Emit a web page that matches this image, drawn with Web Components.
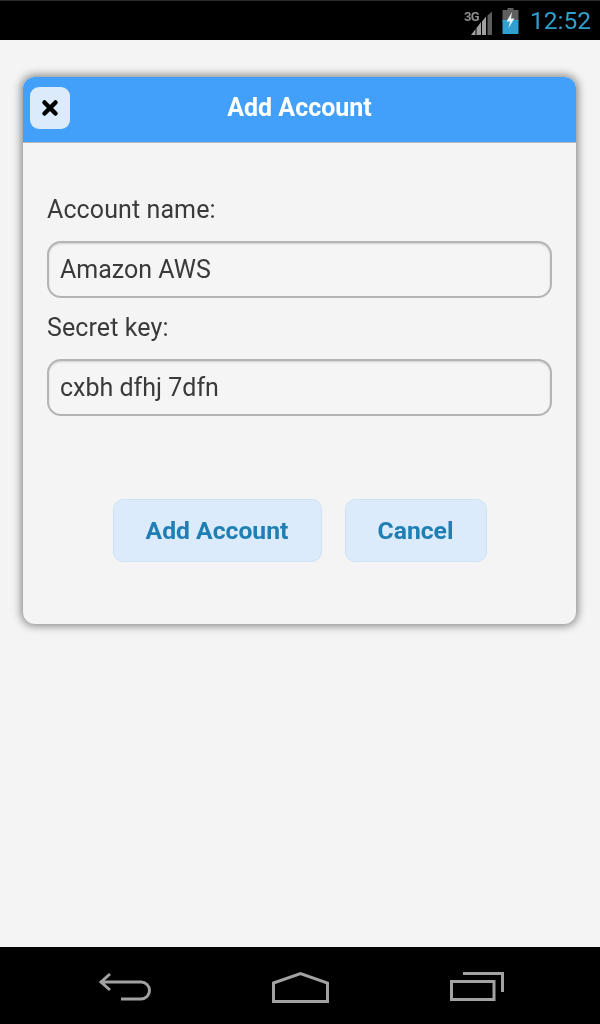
<!DOCTYPE html>
<html>
<head>
<meta charset="utf-8">
<title>Add Account</title>
<style>
  html, body { margin: 0; padding: 0; height: 100%; background: #f4f4f4; }
  body { font-family: Roboto, "Liberation Sans", sans-serif; overflow: hidden; }
</style>
</head>
<body>
<app-screen>
  <status-bar slot="top"></status-bar>
  <account-dialog heading="Add Account">
    <form-field label="Account name:" value="Amazon AWS"></form-field>
    <form-field label="Secret key:" value="cxbh dfhj 7dfn"></form-field>
    <div slot="actions" style="display:flex;justify-content:center;gap:23px">
      <soft-button width="209">Add Account</soft-button>
      <soft-button width="142">Cancel</soft-button>
    </div>
  </account-dialog>
  <nav-bar slot="bottom"></nav-bar>
</app-screen>

<script>
class AppScreen extends HTMLElement {
  constructor() {
    super();
    this.attachShadow({ mode: "open" });
  }
  connectedCallback() {
    this.shadowRoot.innerHTML = `
    <style>
    :host { display: flex; flex-direction: column; width: 600px; height: 1024px; background: #f4f4f4; filter: blur(.45px); }
    main { flex: 1; padding: 37px 23px 0; }
    </style>
    <slot name="top"></slot>
    <main><slot></slot></main>
    <slot name="bottom"></slot>`;
  }
}

class StatusBar extends HTMLElement {
  constructor() {
    super();
    this.attachShadow({ mode: "open" });
  }
  connectedCallback() {
    this.shadowRoot.innerHTML = `
    <style>
    :host { display: flex; align-items: center; justify-content: flex-end; height: 40px; background: #000; padding-right: 9px; box-sizing: border-box; border-top: 1px solid #2a2a2a; }
    .signal { position: relative; width: 29px; height: 34px; margin-right: 9px; }
    .signal svg { display: block; position: absolute; left: 0; top: 0; }
    .net { position: absolute; left: 0; top: 6px; font: bold 13px/13px Roboto, sans-serif; color: #8c8c8c; letter-spacing: -0.8px; }
    .battery { display: block; margin-right: 11px; }
    .clock { font: 400 24.500px/30px Roboto, sans-serif; color: #2fa0d0; }
    </style>
    <div class="signal">
      <svg width="29" height="34" viewBox="0 0 29 34">
        <path d="M7 31h4.500v-6L7 31zM12.500 31H17V18l-4.500 6zM18 31h4V12.500l-4 5z" fill="#a0a0a0"/>
        <path d="M23.500 31H28V7.500l-4.500 4z" fill="#5c5c5c"/>
      </svg>
      <span class="net">3G</span>
    </div>
    <svg class="battery" width="17" height="26" viewBox="0 0 17 26">
      <path d="M5.500 0h6v2h5v11H.5V2h5z" fill="#5e5e5e"/>
      <rect x="0.500" y="12" width="16" height="14" fill="#2fa0d0"/>
      <path d="M10 4 4.500 13.500H8L6.500 20l6-9.500H9z" fill="#e8f4fa"/>
    </svg>
    <span class="clock">12:52</span>`;
  }
}

class AccountDialog extends HTMLElement {
  constructor() {
    super();
    this.attachShadow({ mode: "open" });
  }
  connectedCallback() {
    const heading = this.getAttribute("heading") || "";
    this.shadowRoot.innerHTML = `
    <style>
    :host { display: block; width: 553px; height: 547px; box-sizing: border-box; background: #f4f4f4; border-radius: 12px; box-shadow: 0 0 8px 2px rgba(0,0,0,.45); overflow: hidden; }
    header { position: relative; height: 66px; background: #42a0fb; border-bottom: 1px solid #b8b8b8; box-sizing: border-box; display: flex; align-items: center; justify-content: center; }
    h1 { margin: 0 0 3px; font: 700 25px/30px Roboto, sans-serif; color: #fff; }
    .close { position: absolute; left: 7px; top: 10px; width: 40px; height: 42px; background: #dcebfb; border-radius: 9px; display: flex; align-items: center; justify-content: center; }
    .body { padding: 52px 24px 0 24px; display: flex; flex-direction: column; }
    .fields { display: flex; flex-direction: column; gap: 15px; }
    .actions { margin-top: 83px; }
    </style>
    <header>
      <div class="close">
        <svg width="18" height="18" viewBox="0 0 18 18"><path d="M3.500 3.500l11 11M14.500 3.500l-11 11" stroke="#000" stroke-width="4.500" stroke-linecap="round"/></svg>
      </div>
      <h1>${heading}</h1>
    </header>
    <div class="body">
      <div class="fields"><slot></slot></div>
      <div class="actions"><slot name="actions"></slot></div>
    </div>`;
  }
}

class FormField extends HTMLElement {
  constructor() {
    super();
    this.attachShadow({ mode: "open" });
  }
  connectedCallback() {
    const label = this.getAttribute("label") || "";
    const value = this.getAttribute("value") || "";
    this.shadowRoot.innerHTML = `
    <style>
    :host { display: block; font: 400 25px/30px Roboto, sans-serif; color: #3a3a3a; }
    label { display: block; height: 30px; margin-bottom: 16px; letter-spacing: .1px; }
    .input { height: 57px; box-sizing: border-box; border: 2px solid #b4b4b4; border-radius: 14px; padding: 0 11px; line-height: 53px; box-shadow: inset 0 1px 2px rgba(0,0,0,.15); background: #f5f5f5; }
    </style>
    <label>${label}</label>
    <div class="input">${value}</div>`;
  }
}

class SoftButton extends HTMLElement {
  constructor() {
    super();
    this.attachShadow({ mode: "open" });
  }
  connectedCallback() {
    const width = this.getAttribute("width") || "160";
    this.shadowRoot.innerHTML = `
    <style>
    :host { display: flex; align-items: center; justify-content: center; width: ${width}px; height: 63px; box-sizing: border-box; background: #dcebfb; border: 1px solid #cfe3f6; border-radius: 10px; font: 700 24.700px/30px Roboto, sans-serif; color: #1f7fb5; }
    </style>
    <slot></slot>`;
  }
}

class NavBar extends HTMLElement {
  constructor() {
    super();
    this.attachShadow({ mode: "open" });
  }
  connectedCallback() {
    this.shadowRoot.innerHTML = `
    <style>
    :host { display: flex; justify-content: center; gap: 121px; height: 77px; background: #000; padding-top: 25px; padding-left: 2px; box-sizing: border-box; }
    svg { display: block; fill: none; stroke: #a2a2a2; stroke-width: 3; }
    </style>
    <svg width="52" height="32" viewBox="0 0 52 32"><path d="M11 2 2 10l9 8M2 10h40a7.500 7.500 0 0 1 0 17H22"/></svg>
    <svg width="57" height="32" viewBox="0 0 57 32"><path d="M1.500 11 28.500 1.700 55.500 11V29.500H1.500z"/></svg>
    <svg width="54" height="32" viewBox="0 0 54 32"><path d="M1.500 9.500H44V27.500H1.500zM13 1.500H52.500V20"/></svg>`;
  }
}

customElements.define("app-screen", AppScreen);
customElements.define("status-bar", StatusBar);
customElements.define("account-dialog", AccountDialog);
customElements.define("form-field", FormField);
customElements.define("soft-button", SoftButton);
customElements.define("nav-bar", NavBar);
</script>
</body>
</html>
